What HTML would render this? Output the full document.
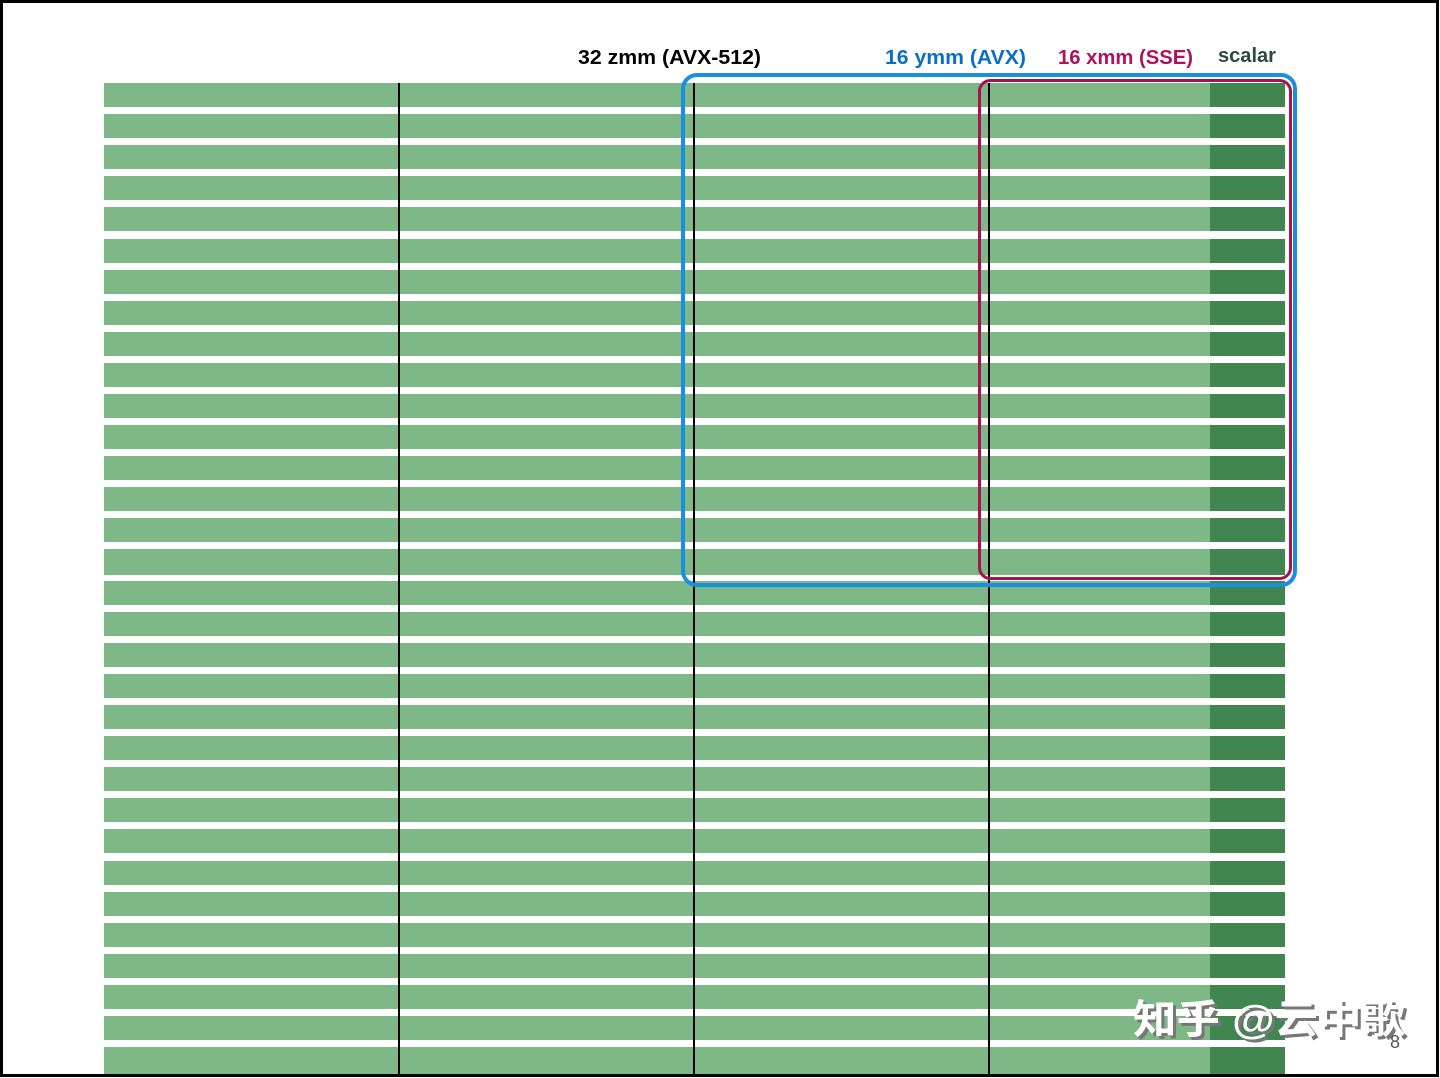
<!DOCTYPE html>
<html><head><meta charset="utf-8"><style>
html,body{margin:0;padding:0;background:#fff;}
svg{display:block;}
</style></head><body>
<svg width="1440" height="1078" viewBox="0 0 1440 1078" xmlns="http://www.w3.org/2000/svg">
<rect x="0" y="0" width="1440" height="1078" fill="#fff"/>
<g fill="#7db886">
<rect x="104" y="83" width="1181" height="24"/><rect x="104" y="114" width="1181" height="24"/><rect x="104" y="145" width="1181" height="24"/><rect x="104" y="176" width="1181" height="24"/>
<rect x="104" y="207" width="1181" height="24"/><rect x="104" y="239" width="1181" height="24"/><rect x="104" y="270" width="1181" height="24"/><rect x="104" y="301" width="1181" height="24"/>
<rect x="104" y="332" width="1181" height="24"/><rect x="104" y="363" width="1181" height="24"/><rect x="104" y="394" width="1181" height="24"/><rect x="104" y="425" width="1181" height="24"/>
<rect x="104" y="456" width="1181" height="24"/><rect x="104" y="487" width="1181" height="24"/><rect x="104" y="518" width="1181" height="24"/><rect x="104" y="549" width="1181" height="26"/>
<rect x="104" y="581" width="1181" height="24"/><rect x="104" y="612" width="1181" height="24"/><rect x="104" y="643" width="1181" height="24"/><rect x="104" y="674" width="1181" height="24"/>
<rect x="104" y="705" width="1181" height="24"/><rect x="104" y="736" width="1181" height="24"/><rect x="104" y="767" width="1181" height="24"/><rect x="104" y="798" width="1181" height="24"/>
<rect x="104" y="829" width="1181" height="24"/><rect x="104" y="861" width="1181" height="24"/><rect x="104" y="892" width="1181" height="24"/><rect x="104" y="923" width="1181" height="24"/>
<rect x="104" y="954" width="1181" height="24"/><rect x="104" y="985" width="1181" height="24"/><rect x="104" y="1016" width="1181" height="24"/><rect x="104" y="1047" width="1181" height="27"/>
</g>
<g fill="#418550">
<rect x="1210" y="83" width="75" height="24"/><rect x="1210" y="114" width="75" height="24"/><rect x="1210" y="145" width="75" height="24"/><rect x="1210" y="176" width="75" height="24"/>
<rect x="1210" y="207" width="75" height="24"/><rect x="1210" y="239" width="75" height="24"/><rect x="1210" y="270" width="75" height="24"/><rect x="1210" y="301" width="75" height="24"/>
<rect x="1210" y="332" width="75" height="24"/><rect x="1210" y="363" width="75" height="24"/><rect x="1210" y="394" width="75" height="24"/><rect x="1210" y="425" width="75" height="24"/>
<rect x="1210" y="456" width="75" height="24"/><rect x="1210" y="487" width="75" height="24"/><rect x="1210" y="518" width="75" height="24"/><rect x="1210" y="549" width="75" height="26"/>
<rect x="1210" y="581" width="75" height="24"/><rect x="1210" y="612" width="75" height="24"/><rect x="1210" y="643" width="75" height="24"/><rect x="1210" y="674" width="75" height="24"/>
<rect x="1210" y="705" width="75" height="24"/><rect x="1210" y="736" width="75" height="24"/><rect x="1210" y="767" width="75" height="24"/><rect x="1210" y="798" width="75" height="24"/>
<rect x="1210" y="829" width="75" height="24"/><rect x="1210" y="861" width="75" height="24"/><rect x="1210" y="892" width="75" height="24"/><rect x="1210" y="923" width="75" height="24"/>
<rect x="1210" y="954" width="75" height="24"/><rect x="1210" y="985" width="75" height="24"/><rect x="1210" y="1016" width="75" height="24"/><rect x="1210" y="1047" width="75" height="27"/>
</g>
<g fill="#000">
<rect x="398" y="83" width="2" height="992"/>
<rect x="693" y="83" width="2" height="992"/>
<rect x="988" y="83" width="2" height="992"/>
</g>
<rect x="683" y="75" width="612" height="510" rx="14" fill="none" stroke="#1a8fe0" stroke-width="4"/>
<rect x="979.5" y="80.5" width="311" height="498" rx="11" fill="none" stroke="#a8124f" stroke-width="3"/>
<g font-family="'Liberation Sans', sans-serif" font-weight="bold" font-size="20">
<text x="578" y="64" textLength="183" lengthAdjust="spacingAndGlyphs" fill="#000">32 zmm (AVX-512)</text>
<text x="885" y="64" textLength="141" lengthAdjust="spacingAndGlyphs" fill="#0a6fc2">16 ymm (AVX)</text>
<text x="1058" y="64" textLength="135" lengthAdjust="spacingAndGlyphs" fill="#b0125a">16 xmm (SSE)</text>
<text x="1218" y="62" textLength="58" lengthAdjust="spacingAndGlyphs" fill="#2d4a3a">scalar</text>
</g>
<text x="1136" y="1036" font-family="'Liberation Sans','Noto Sans CJK SC',sans-serif" font-size="40" font-weight="bold" fill="#777" textLength="272" lengthAdjust="spacingAndGlyphs">知乎 @云中歌</text>
<text x="1133" y="1033" font-family="'Liberation Sans','Noto Sans CJK SC',sans-serif" font-size="40" font-weight="bold" fill="#ffffff" textLength="272" lengthAdjust="spacingAndGlyphs">知乎 @云中歌</text>
<text x="1390" y="1048" font-family="'Liberation Sans',sans-serif" font-size="18" fill="#555">8</text>
<rect x="1.5" y="1.5" width="1436" height="1074" fill="none" stroke="#000" stroke-width="3"/>
</svg>
</body></html>
